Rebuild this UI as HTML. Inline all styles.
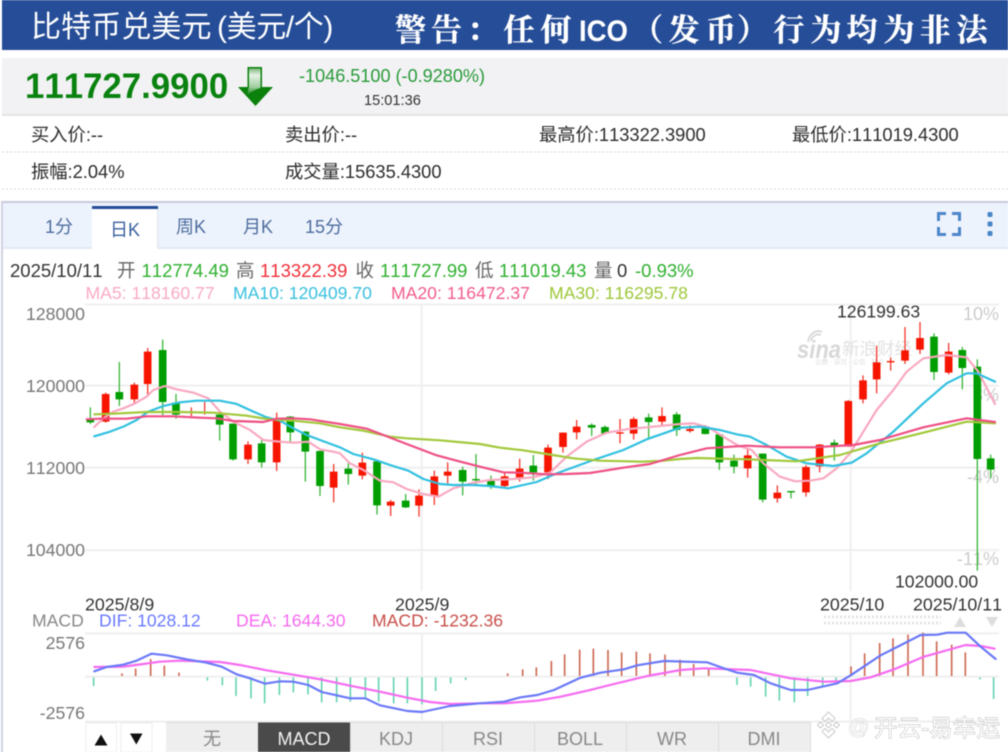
<!DOCTYPE html>
<html lang="zh">
<head>
<meta charset="utf-8">
<title>比特币兑美元</title>
<style>
html,body{margin:0;padding:0;background:#fff;width:1008px;height:752px;overflow:hidden}
svg{display:block;filter:blur(.45px)}
text{font-family:"Liberation Sans","Noto Sans CJK SC",sans-serif;white-space:pre;font-kerning:none}
.i{font-size:18.3px;fill:#2c2c2c}
.d{font-size:18.5px}
.m{font-size:17.6px}
.ax{font-size:17.7px;fill:#777}
.pc{font-size:18px;fill:#ccc}
.tb{font-size:18px;fill:#4d6c9c}
.bt{font-size:18px;fill:#888;text-anchor:middle}
.l{fill:none;stroke-linejoin:round;stroke-linecap:round}
.sf{font-family:"Noto Serif CJK SC",serif;font-size:31px;font-weight:700;fill:#fff;stroke:#fff;stroke-width:.35}
</style>
</head>
<body>
<svg width="1008" height="752" viewBox="0 0 1008 752" xmlns="http://www.w3.org/2000/svg">
<defs>
<linearGradient id="ag" x1="0" y1="0" x2="0" y2="1"><stop offset="0" stop-color="#7cb97c"/><stop offset=".25" stop-color="#e6f2e6"/><stop offset=".7" stop-color="#a0cfa0"/><stop offset="1" stop-color="#0d810d"/></linearGradient>
</defs>
<rect width="1008" height="752" fill="#fff"/>

<!-- header -->
<rect x="2" y="0" width="1006" height="50" fill="#264d97"/>
<text x="31" y="37" font-size="30" fill="#fff" letter-spacing=".1">比特币兑美元</text>
<text x="217" y="37" font-size="30" fill="#fff" letter-spacing="-.4">(美元/个)</text>
<text class="sf" x="395" y="41">警</text>
<text class="sf" x="431" y="41">告</text>
<text class="sf" x="467" y="41">：</text>
<text class="sf" x="503.500" y="41">任</text>
<text class="sf" x="540.500" y="41">何</text>
<text x="579" y="41" font-size="30" font-weight="700" fill="#fff" textLength="49" lengthAdjust="spacingAndGlyphs">ICO</text>
<text class="sf" x="632" y="41">（</text>
<text class="sf" x="668.500" y="41">发</text>
<text class="sf" x="705.500" y="41">币</text>
<text class="sf" x="737" y="41">）</text>
<text class="sf" x="773.500" y="41">行</text>
<text class="sf" x="810.500" y="41">为</text>
<text class="sf" x="846.500" y="41">均</text>
<text class="sf" x="883.500" y="41">为</text>
<text class="sf" x="919.500" y="41">非</text>
<text class="sf" x="956.500" y="41">法</text>

<!-- price row -->
<rect x="2" y="58" width="1006" height="57" fill="#f2f2f4"/>
<rect x="2" y="114" width="1006" height="2" fill="#e4e4e6"/>
<text x="25" y="98" font-size="34.8" font-weight="700" fill="#0a820f">111727.9900</text>
<path d="M247.500 67H262V87H273L255.500 106L238 87H247.500Z" fill="#0b800b"/>
<path d="M249 68.500H260.500V88C256 89 251 92 247 95L249 87Z" fill="url(#ag)"/>
<text x="299" y="82" font-size="18" fill="#2a9a3a" textLength="186" lengthAdjust="spacingAndGlyphs">-1046.5100 (-0.9280%)</text>
<text x="364" y="105" font-size="14.600" fill="#333">15:01:36</text>

<!-- info -->
<text class="i" x="31" y="141">买入价:--</text>
<text class="i" x="285" y="141">卖出价:--</text>
<text class="i" x="539" y="141">最高价:113322.3900</text>
<text class="i" x="792" y="141">最低价:111019.4300</text>
<line x1="2" y1="152" x2="1008" y2="152" stroke="#d8d8d8" stroke-width="1" stroke-dasharray="2 2"/>
<text class="i" x="31" y="178">振幅:2.04%</text>
<text class="i" x="285" y="178">成交量:15635.4300</text>
<line x1="2" y1="189" x2="1008" y2="189" stroke="#d8d8d8" stroke-width="1" stroke-dasharray="2 2"/>

<!-- panel -->
<rect x="2" y="201" width="1006" height="2" fill="#c8cadb"/>
<rect x="1" y="201" width="2" height="551" fill="#d0d2e2"/>
<rect x="3" y="203" width="1005" height="45" fill="#edf3fd"/>
<rect x="3" y="247" width="1005" height="2" fill="#e3e9f3"/>
<rect x="92" y="207" width="66" height="42" fill="#fff"/>
<rect x="92" y="206" width="66" height="3" fill="#264d97"/>
<rect x="157" y="209" width="1.500" height="40" fill="#e3e9f3"/>
<text class="tb" x="45" y="233">1分</text>
<text class="tb" x="110" y="236" style="fill:#3a619f">日K</text>
<text class="tb" x="176" y="233">周K</text>
<text class="tb" x="243" y="233">月K</text>
<text class="tb" x="305" y="233">15分</text>
<path d="M938.500 221V213.500H946M952 213.500H959.500V221M938.500 227V234.500H946M952 234.500H959.500V227" fill="none" stroke="#4a86c8" stroke-width="3"/>
<rect x="987.500" y="212" width="5" height="5" rx="1.500" fill="#4a86c8"/>
<rect x="987.500" y="221.500" width="5" height="5" rx="1.500" fill="#4a86c8"/>
<rect x="987.500" y="231" width="5" height="5" rx="1.500" fill="#4a86c8"/>

<!-- ohlc -->
<g class="d">
<text x="10" y="277" fill="#333">2025/10/11</text>
<text x="117" y="277" fill="#666">开</text>
<text x="141.500" y="277" fill="#2fb02f">112774.49</text>
<text x="236" y="277" fill="#666">高</text>
<text x="260" y="277" fill="#f0303a">113322.39</text>
<text x="355.500" y="277" fill="#666">收</text>
<text x="380" y="277" fill="#2fb02f">111727.99</text>
<text x="475" y="277" fill="#666">低</text>
<text x="499" y="277" fill="#2fb02f">111019.43</text>
<text x="594" y="277" fill="#666">量</text>
<text x="617" y="277" fill="#333">0</text>
<text x="635" y="277" fill="#2fb02f">-0.93%</text>
</g>
<g class="m">
<text x="85.500" y="299" fill="#f9abc4">MA5: 118160.77</text>
<text x="233" y="299" fill="#38c0de">MA10: 120409.70</text>
<text x="391" y="299" fill="#f25c8c">MA20: 116472.37</text>
<text x="549" y="299" fill="#9dc73a">MA30: 116295.78</text>
</g>

<!-- grid -->
<g stroke="#eeeeee" stroke-width="1.800" fill="none">
<path d="M85 304.500H999M85 385.700H999M85 467.700H999M85 550.200H999"/>
<path d="M421.700 304V591M850.700 304V591"/>
<path d="M85 633.300H999M85 676.700H999M85 721.700H999"/>
<path d="M422 633V722M850.700 633V722"/>
</g>

<!-- axis -->
<g class="ax" text-anchor="end">
<text x="85" y="320">128000</text>
<text x="85" y="392">120000</text>
<text x="85" y="474">112000</text>
<text x="85" y="556">104000</text>
<text x="85" y="649">2576</text>
<text x="85" y="719">-2576</text>
</g>
<g class="pc" text-anchor="end">
<text x="999" y="320">10%</text>
<text x="999" y="401">3%</text>
<text x="999" y="483">-4%</text>
<text x="999" y="565">-11%</text>
</g>

<!-- sina watermark -->
<g fill="#d8d8d8">
<text x="797" y="358" font-size="25" font-weight="700" font-style="italic" textLength="44" lengthAdjust="spacingAndGlyphs">sina</text>
<path d="M808 342C809 334 816 329 822 332M811 341C812 336 817 333 821 335" fill="none" stroke="#d8d8d8" stroke-width="1.800"/>
<text x="842" y="355" font-size="17.500" style="fill:#e2e2e2">新浪财经</text>
<text x="815" y="364" font-size="6.500" style="fill:#ddd">公费 · 深沉 · 公信 · 独立</text>
</g>

<!-- candles -->
<g transform="translate(0,300) scale(.33333)">
<path stroke="#3cb83c" stroke-width="4" fill="none" d="M271 322V372M358 186V318M488 119V345M528 282V356M659 336V422M699 370V482M785 420V503M871 348V425M916 393V545M960 452V588"/>
<path stroke="#009e00" stroke-width="23" fill="none" d="M271 357V367M358 276V298M488 150V306M528 308V344M659 344V374M699 371V478M785 430V487M871 350V397M916 395V455M960 453V558"/>
<path stroke="#f53a32" stroke-width="4" fill="none" d="M317 278V368M403 248V312M443 144V290M574 322V348M614 306V344M744 424V492M830 338V513M1001 492V607"/>
<path stroke="#f71500" stroke-width="23" fill="none" d="M317 282V365M403 254V298M443 155V252M574 336V338M614 335V339M744 434V478M830 362V487M1001 515V563"/>
</g>
<g transform="translate(340,300) scale(.33333)">
<path stroke="#3cb83c" stroke-width="4" fill="none" d="M25 490V554M111 482V644M197 582V624M368 500V586M408 462V555M453 527V567M580 465V542M755 370V408M795 376V402M926 341V415M1010 336V408"/>
<path stroke="#009e00" stroke-width="23" fill="none" d="M25 506V522M111 484V616M197 602V622M368 510V545M408 537V541M453 543V557M580 497V517M755 375V383M795 381V401M926 352V366M1010 343V390"/>
<path stroke="#f53a32" stroke-width="4" fill="none" d="M67 458V538M152 600V648M237 568V650M283 512V615M323 487V550M494 518V562M539 476V545M624 434V537M669 397V458M710 360V418M840 357V430M881 351V419M966 322V375"/>
<path stroke="#f71500" stroke-width="23" fill="none" d="M67 488V527M152 605V617M237 587V617M283 529V587M323 515V527M494 529V558M539 506V532M624 443V517M669 398V441M710 380V397M840 397V401M881 357V401M966 348V365"/>
</g>
<g transform="translate(680,300) scale(.33333)">
<path stroke="#3cb83c" stroke-width="4" fill="none" d="M76 375V403M118 402V510M162 464V520M248 460V607M333 573V595M463 419V482M762 100V240M847 141V268M892 178V812M932 464V535"/>
<path stroke="#009e00" stroke-width="23" fill="none" d="M76 385V402M118 403V487M162 482V500M248 461V599M333 573V577M463 428V437M762 110V216M847 150V204M892 200V477M932 475V509"/>
<path stroke="#f53a32" stroke-width="4" fill="none" d="M30 376V398M203 445V533M292 556V608M378 495V590M419 432V517M505 300V440M549 226V310M590 137V280M632 172V212M675 81V192M720 66V162M806 129V223"/>
<path stroke="#f71500" stroke-width="23" fill="none" d="M30 387V393M203 466V505M292 578V595M378 501V577M419 434V499M505 303V440M549 241V298M590 187V238M632 183V187M675 151V182M720 114V149M806 155V218"/>
</g>

<!-- MAs -->
<g transform="translate(0,300) scale(.33333)" class="l" stroke-width="6.500">
<polyline stroke="#f9a8c0" points="283,381 310,355 340,335 370,325 405,310 440,290 460,270 495,258 530,268 580,278 625,295 660,335 700,365 750,390 790,420 840,425 880,428 925,425 960,448 1000,455 1020,460 1050,490 1090,510 1140,542 1180,547 1220,567 1270,582 1315,590 1360,565 1420,548 1470,540 1540,537 1600,532 1650,518 1700,470 1760,425 1820,398 1880,388 1940,382 2040,372 2080,370 2125,382 2170,410 2215,437 2255,450 2290,490 2340,530 2385,544 2430,542 2470,535 2510,505 2550,460 2590,395 2630,330 2680,270 2720,215 2770,175 2840,165 2900,172 2935,215 2985,312"/>
<polyline stroke="#2fc0e0" points="283,409 330,395 370,380 410,360 445,335 490,318 540,307 590,302 660,302 710,312 760,335 800,352 840,362 880,385 920,405 960,420 1020,442 1060,462 1120,478 1170,495 1225,512 1270,537 1320,552 1360,555 1420,555 1470,558 1525,565 1610,546 1670,520 1780,480 1870,450 1940,418 2040,383 2100,380 2160,390 2210,403 2250,410 2300,435 2360,470 2420,490 2500,498 2555,488 2600,460 2680,395 2770,310 2840,250 2900,220 2930,220 2985,245"/>
<polyline stroke="#a2c83a" points="283,343 340,341 440,336 540,336 640,338 740,347 800,357 880,362 960,370 1020,382 1090,392 1170,410 1220,415 1320,421 1440,432 1500,443 1570,451 1640,462 1720,475 1800,482 1920,485 1980,483 2040,477 2090,474 2240,478 2390,484 2520,465 2640,430 2770,398 2900,365 2985,370"/>
<polyline stroke="#ee4f84" points="260,358 300,356 380,356 440,349 520,349 600,353 650,355 700,363 790,366 830,356 880,355 930,358 1020,372 1100,386 1150,405 1220,432 1310,466 1370,482 1440,500 1510,517 1560,518 1640,523 1700,522 1770,519 1870,503 1950,492 2040,465 2120,445 2240,437 2340,442 2440,442 2560,435 2640,420 2770,382 2900,355 2985,366"/>
</g>

<!-- labels over chart -->
<text class="m" x="837" y="317.500" fill="#333">126199.63</text>
<text class="m" x="895" y="587.500" fill="#333">102000.00</text>
<g font-size="17.800" fill="#333">
<text x="85" y="610.500">2025/8/9</text>
<text x="395" y="610.500">2025/9</text>
<text x="820" y="610.500">2025/10</text>
<text x="913" y="610.500">2025/10/11</text>
</g>
<g class="m">
<text x="32" y="626.500" fill="#888">MACD</text>
<text x="99" y="626.500" fill="#6a7aff">DIF: 1028.12</text>
<text x="236" y="626.500" fill="#f56af0">DEA: 1644.30</text>
<text x="372" y="626.500" fill="#c8504a">MACD: -1232.36</text>
</g>
<!-- slider dots + arrows -->
<line x1="824" y1="617" x2="941" y2="617" stroke="#e4e4e4" stroke-width="3" stroke-dasharray="2 2"/>
<line x1="824" y1="623" x2="941" y2="623" stroke="#e4e4e4" stroke-width="3" stroke-dasharray="2 2"/>
<path d="M960 617L966 627H954Z" fill="#ddd"/>
<path d="M986 617H998L992 627Z" fill="#ddd"/>

<!-- MACD -->
<g transform="translate(0,590) scale(.33333)" fill="none">
<path stroke="#68d4b4" stroke-width="5" d="M281 262V288M622 262V272M667 262V286M708 262V318M753 262V325M794 262V340M838 262V315M880 262V307M924 262V313M965 262V337M1010 262V337M1051 262V335M1096 262V325M1136 262V335M1181 262V340M1222 262V340M1266 262V343M1307 262V303M1352 262V280M1397 262V270"/>
<path stroke="#cf6a55" stroke-width="5" d="M366 250V258M407 236V258M452 207V258M493 227V258M537 248V258"/>
</g>
<g transform="translate(504,590) scale(.33333)" fill="none">
<path stroke="#68d4b4" stroke-width="5" d="M699 262V285M740 262V290M785 262V320M826 262V332M871 262V337M911 262V318M956 262V290M996 262V275M1428 262V268M1469 262V327"/>
<path stroke="#cf6a55" stroke-width="5" d="M11 250V258M56 238V258M97 232V258M142 213V258M182 193V258M227 179V258M268 176V258M312 180V258M353 187V258M397 185V258M438 190V258M483 194V258M528 209V258M569 222V258M614 234V258M1041 229V258M1082 190V258M1127 159V258M1167 145V258M1212 134V258M1257 128V258M1298 154V258M1343 164V258M1384 187V258"/>
</g>
<g transform="translate(0,590) scale(.33333)" class="l" stroke-width="6.500">
<polyline stroke="#f56af0" points="283,231 370,230 430,222 480,215 540,212 660,216 720,225 800,241 880,254 960,268 1050,287 1140,305 1222,323 1290,336 1350,342 1440,340 1512,340 1612,332 1682,320 1762,302 1842,282 1942,258 2042,240 2112,235 2252,240 2372,265 2472,275 2552,273 2612,262 2682,238 2772,200 2897,165 2942,168 2984,176"/>
<polyline stroke="#6a78f8" points="283,244 320,231 370,224 410,212 455,191 500,196 560,208 620,218 665,230 710,253 750,265 795,281 840,274 880,275 925,285 965,306 1010,316 1050,325 1096,325 1140,346 1222,363 1266,366 1350,348 1440,340 1512,335 1562,322 1612,315 1662,300 1742,263 1802,248 1872,238 1912,226 1992,213 2122,217 2172,235 2212,248 2262,255 2312,280 2372,300 2422,300 2512,280 2552,256 2642,196 2762,135 2812,134 2842,128 2897,128 2942,170 2987,207"/>
</g>

<!-- bottom buttons -->
<rect x="86" y="723" width="30.500" height="29" fill="#fff" stroke="#eee"/>
<rect x="121" y="723" width="31" height="29" fill="#fff" stroke="#eee"/>
<path d="M94.500 745.500L101 734.500L107.500 745.500Z" fill="#111"/>
<path d="M130 733.500H142.500L136.300 744.500Z" fill="#111"/>
<rect x="166" y="722.500" width="645" height="30" fill="#eee"/>
<path d="M350.500 722V752M442.500 722V752M534.500 722V752M626.500 722V752M718.500 722V752M810.500 722V752M166 722.500H811" stroke="#ddd" fill="none"/>
<rect x="258" y="722.500" width="92" height="30" fill="#4a4a4a"/>
<text class="bt" x="212" y="745">无</text>
<text class="bt" x="304" y="745" style="fill:#f2f2f2">MACD</text>
<text class="bt" x="396" y="745">KDJ</text>
<text class="bt" x="488" y="745">RSI</text>
<text class="bt" x="580" y="745">BOLL</text>
<text class="bt" x="672" y="745">WR</text>
<text class="bt" x="764" y="745">DMI</text>

<!-- bottom right watermark -->
<g fill="#fff" stroke="#bdbdbd" stroke-width=".8">
<path d="M828.500 712L835 718.500L832 721.500L828.500 718L825 721.500L822 718.500Z"/>
<path d="M828.500 722L831.500 725L828.500 728L825.500 725Z"/>
<path d="M820.500 722L823.500 725L820.500 728L817.500 725Z"/>
<path d="M836.500 722L839.500 725L836.500 728L833.500 725Z"/>
<path d="M822 731.500L825 728.500L828.500 732L832 728.500L835 731.500L828.500 738Z"/>
</g>
<text x="848" y="734" font-size="21" fill="#fff" stroke="#b8b8b8" stroke-width=".7" paint-order="stroke">@</text>
<text x="874" y="736" font-size="23.500" fill="#fff" stroke="#b0b0b0" stroke-width=".9" paint-order="stroke" textLength="126">开云-易幸运</text>
</svg>
</body>
</html>
